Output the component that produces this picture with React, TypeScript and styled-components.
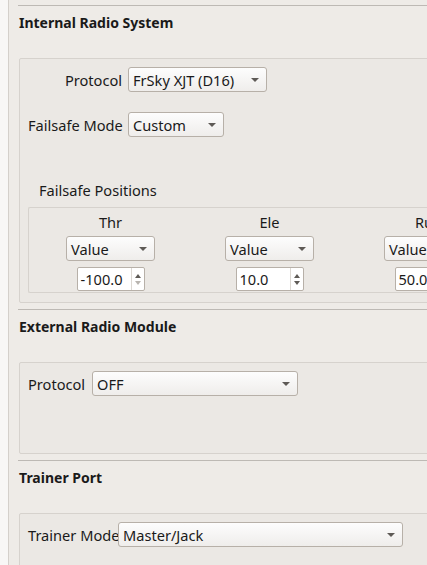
import React from 'react';
import styled, { createGlobalStyle } from 'styled-components';

const Global = createGlobalStyle`
  html, body {
    margin: 0;
    padding: 0;
    width: 427px;
    height: 565px;
    overflow: hidden;
    background: #eeebe7;
  }
  body {
    font-family: 'Noto Sans', 'DejaVu Sans', sans-serif;
    font-size: 14.6px;
    color: #1a1a1a;
  }
`;

const Root = styled.div`
  display: flex;
  width: 480px;
  height: 565px;
`;

const SideStrip = styled.div`
  width: 8px;
  flex: none;
  background: #f8f7f6;
  border-right: 1px solid #d4d0cb;
`;

const Main = styled.div`
  flex: 1;
  display: flex;
  flex-direction: column;
  padding: 5px 0 0 9px;
`;

const Section = styled.section`
  border-top: 1px solid #bdb9b4;
  margin-bottom: 6px;
`;

const Heading = styled.div`
  font-weight: bold;
  font-size: 14px;
  line-height: 16px;
  padding: 9px 0 0 1px;
  margin-bottom: 27px;
`;

const Frame = styled.div<{ $height: number }>`
  margin-left: 1px;
  border: 1px solid #d6d2cd;
  border-radius: 2px;
  background: #ebe8e4;
  padding: 8px 0 0 8px;
  height: ${(p) => p.$height}px;
  box-sizing: border-box;
`;

const FormGrid = styled.div<{ $label: number; $gap: number }>`
  display: grid;
  grid-template-columns: ${(p) => p.$label}px auto;
  column-gap: ${(p) => p.$gap}px;
  row-gap: 20px;
  align-items: center;
  justify-items: start;
`;

const Label = styled.span<{ $right?: boolean }>`
  justify-self: ${(p) => (p.$right ? 'end' : 'start')};
  line-height: 16px;
  white-space: nowrap;
`;

const ComboBox = styled.div<{ $width: number }>`
  width: ${(p) => p.$width}px;
  height: 25px;
  box-sizing: border-box;
  border: 1px solid #b7b0a8;
  border-radius: 3px;
  background: linear-gradient(#fdfdfd, #efedeb);
  display: flex;
  align-items: center;
  padding: 0 7px 0 4px;
  justify-content: space-between;
  white-space: nowrap;
  overflow: hidden;
`;

const Arrow = styled.span`
  flex: none;
  width: 0;
  height: 0;
  border-left: 4px solid transparent;
  border-right: 4px solid transparent;
  border-top: 4px solid #5e5a56;
`;

const Combo: React.FC<{ width: number; value: string }> = ({ width, value }) => (
  <ComboBox $width={width}>
    <span>{value}</span>
    <Arrow />
  </ComboBox>
);

const SubTitle = styled.div`
  line-height: 16px;
  margin: 45px 0 9px 11px;
`;

const Positions = styled.div`
  border: 1px solid #d6d2cd;
  border-right: none;
  border-radius: 2px;
  background: #ebe8e4;
  display: flex;
  padding: 6px 0 1px 2px;
  overflow: hidden;
`;

const Channel = styled.div`
  width: 159px;
  flex: none;
  display: flex;
  flex-direction: column;
  align-items: center;
  gap: 6px;
`;

const ChannelName = styled.div`
  line-height: 16px;
`;

const SpinBox = styled.div`
  width: 68px;
  height: 24px;
  box-sizing: border-box;
  border: 1px solid #b7b0a8;
  border-radius: 2px;
  background: #fff;
  display: flex;
  align-items: center;
`;

const SpinText = styled.span`
  flex: 1;
  padding-left: 3px;
  white-space: nowrap;
  overflow: hidden;
`;

const SpinButtons = styled.div`
  flex: none;
  width: 12px;
  height: 100%;
  border-left: 1px solid #dcd8d3;
  display: flex;
  flex-direction: column;
  align-items: center;
  justify-content: center;
  gap: 3px;
`;

const SpinArrow = styled.span<{ $down?: boolean; $off?: boolean }>`
  width: 0;
  height: 0;
  border-left: 3px solid transparent;
  border-right: 3px solid transparent;
  ${(p) => (p.$down ? 'border-top' : 'border-bottom')}: 4px solid ${(p) => (p.$off ? '#b9b5b0' : '#5e5a56')};
`;

const Spin: React.FC<{ value: string; atMin?: boolean }> = ({ value, atMin }) => (
  <SpinBox>
    <SpinText>{value}</SpinText>
    <SpinButtons>
      <SpinArrow />
      <SpinArrow $down $off={atMin} />
    </SpinButtons>
  </SpinBox>
);

const channels = [
  { name: 'Thr', value: '-100.0', atMin: true },
  { name: 'Ele', value: '10.0' },
  { name: 'Rud', value: '50.0' },
];

export default function App() {
  return (
    <Root>
      <Global />
      <SideStrip />
      <Main>
        <Section>
          <Heading>Internal Radio System</Heading>
          <Frame $height={245}>
            <FormGrid $label={94} $gap={6}>
              <Label $right>Protocol</Label>
              <Combo width={139} value="FrSky XJT (D16)" />
              <Label>Failsafe Mode</Label>
              <Combo width={96} value="Custom" />
            </FormGrid>
            <SubTitle>Failsafe Positions</SubTitle>
            <Positions>
              {channels.map((c) => (
                <Channel key={c.name}>
                  <ChannelName>{c.name}</ChannelName>
                  <Combo width={89} value="Value" />
                  <Spin value={c.value} atMin={c.atMin} />
                </Channel>
              ))}
            </Positions>
          </Frame>
        </Section>
        <Section>
          <Heading>External Radio Module</Heading>
          <Frame $height={92}>
            <FormGrid $label={58} $gap={6}>
              <Label>Protocol</Label>
              <Combo width={206} value="OFF" />
            </FormGrid>
          </Frame>
        </Section>
        <Section>
          <Heading>Trainer Port</Heading>
          <Frame $height={80}>
            <FormGrid $label={89} $gap={1}>
              <Label>Trainer Mode</Label>
              <Combo width={285} value="Master/Jack" />
            </FormGrid>
          </Frame>
        </Section>
      </Main>
    </Root>
  );
}
